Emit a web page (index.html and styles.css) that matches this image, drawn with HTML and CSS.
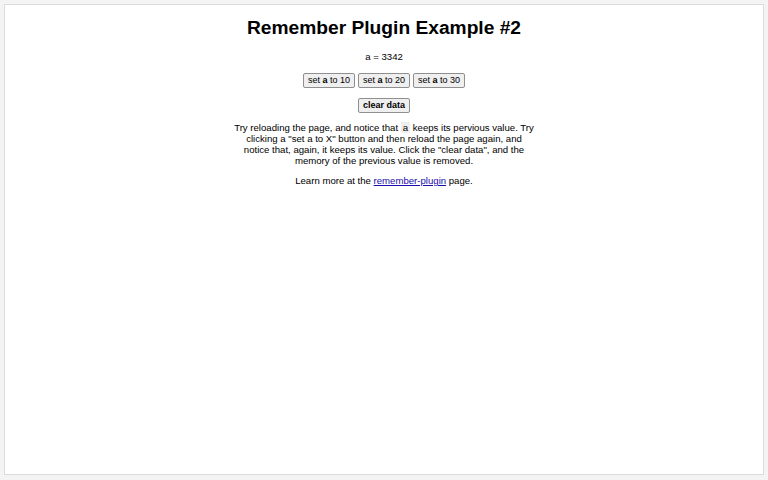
FILE: index.html
```html
<!DOCTYPE html>
<html>
<head>
    <meta charset="UTF-8">
    <title>Remember Plugin Example #2</title>
<link rel="stylesheet" href="styles.css">
</head>
<body>
    <div class="page">
        <h1>Remember Plugin Example #2</h1>
        <p class="value">a = 3342</p>
        <div class="buttons">
            <button>set <b>a</b> to 10</button>
            <button>set <b>a</b> to 20</button>
            <button>set <b>a</b> to 30</button>
        </div>
        <div class="buttons">
            <button class="clear">clear data</button>
        </div>
        <p class="info">Try reloading the page, and notice that <code>a</code> keeps its pervious value. Try clicking a "set a to X" button and then reload the page again, and notice that, again, it keeps its value. Click the "clear data", and the memory of the previous value is removed.</p>
        <p class="info">Learn more at the <a href="#">remember-plugin</a> page.</p>
    </div>
</body>
</html>
```

FILE: styles.css
```css
html, body {
  margin: 0;
  background-color: #f4f4f4;
}

body {
  padding: 4px;
  font-family: "Liberation Sans", Arial, sans-serif;
  font-size: 9.6px;
  color: #000;
}

.page {
  min-height: 469px;
  background-color: #fff;
  border: 1px solid #dcdcdc;
  text-align: center;
}

h1 {
  margin: 0;
  padding-top: 12px;
  font-size: 19.2px;
  line-height: 22px;
}

.value {
  margin: 12px 0 0;
  line-height: 11px;
}

.buttons {
  margin-top: 11px;
  display: flex;
  justify-content: center;
  gap: 3px;
}

.buttons + .buttons {
  margin-top: 10px;
}

button {
  font-family: "Liberation Sans", Arial, sans-serif;
  font-size: 9px;
  height: 15px;
  padding: 0 4px;
  border: 1px solid #8f8f8f;
  border-radius: 2px;
  background-color: #efefef;
  color: #000;
  line-height: 11px;
}

.clear {
  font-weight: bold;
}

.info {
  max-width: 300px;
  margin: 9px auto 0;
  line-height: 11px;
}

.info + .info {
  margin-top: 9px;
}

code {
  font-family: "Liberation Sans", Arial, sans-serif;
  background-color: #eee;
  padding: 0 2px;
}

a {
  color: #1a0dab;
}
```
